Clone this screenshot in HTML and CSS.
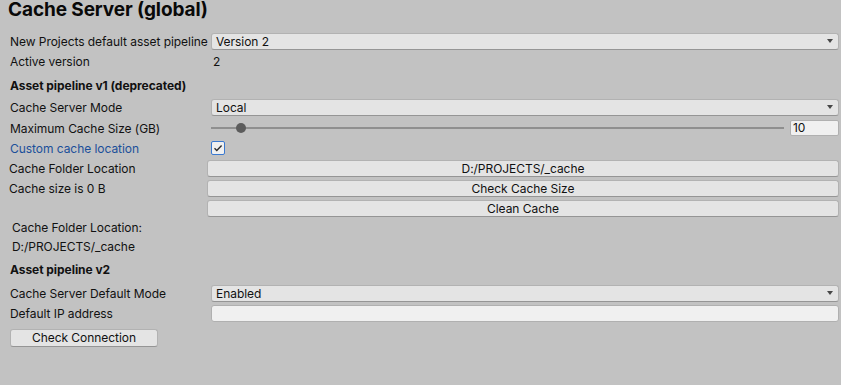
FILE: index.html
```html
<!DOCTYPE html>
<html>
<head>
<meta charset="utf-8">
<link rel="stylesheet" href="styles.css">
</head>
<body>
<div class="panel">
  <div class="title">Cache Server (global)</div>

  <div class="row r1">
    <div class="label">New Projects default asset pipeline</div>
    <div class="field"><div class="dropdown"><span>Version 2</span><span class="arrow"></span></div></div>
  </div>
  <div class="row">
    <div class="label">Active version</div>
    <div class="field"><span class="value">2</span></div>
  </div>

  <div class="row header h1">Asset pipeline v1 (deprecated)</div>

  <div class="row r-mode">
    <div class="label">Cache Server Mode</div>
    <div class="field"><div class="dropdown"><span>Local</span><span class="arrow"></span></div></div>
  </div>
  <div class="row r-size">
    <div class="label">Maximum Cache Size (GB)</div>
    <div class="field slider-field">
      <div class="slider"><div class="track"></div><div class="thumb"></div></div>
      <div class="numfield">10</div>
    </div>
  </div>
  <div class="row">
    <div class="label blue">Custom cache location</div>
    <div class="field">
      <div class="checkbox">
        <svg width="10" height="10" viewBox="0 0 10 10"><path d="M1.5 5.2 L3.8 7.4 L8.6 2.4" fill="none" stroke="#2b2b2b" stroke-width="1.4"/></svg>
      </div>
    </div>
  </div>
  <div class="row">
    <div class="label lb">Cache Folder Location</div>
    <div class="field bfield"><div class="button">D:/PROJECTS/_cache</div></div>
  </div>
  <div class="row">
    <div class="label lb">Cache size is 0 B</div>
    <div class="field bfield"><div class="button">Check Cache Size</div></div>
  </div>
  <div class="row">
    <div class="label lb"></div>
    <div class="field bfield"><div class="button">Clean Cache</div></div>
  </div>
  <div class="row info">Cache Folder Location:</div>
  <div class="row info">D:/PROJECTS/_cache</div>

  <div class="row header h2">Asset pipeline v2</div>

  <div class="row r-def">
    <div class="label">Cache Server Default Mode</div>
    <div class="field"><div class="dropdown"><span>Enabled</span><span class="arrow"></span></div></div>
  </div>
  <div class="row">
    <div class="label">Default IP address</div>
    <div class="field"><div class="textfield"></div></div>
  </div>
  <div class="row r-conn">
    <div class="button conn">Check Connection</div>
  </div>
</div>
</body>
</html>
```

FILE: styles.css
```css
html, body {
  margin: 0;
  padding: 0;
  background: #c2c2c2;
}
body {
  width: 841px;
  height: 385px;
  overflow: hidden;
  font-family: Inter, "Noto Sans", sans-serif;
  font-size: 12px;
  letter-spacing: -0.05px;
  color: #111111;
}
.panel {
  display: flex;
  flex-direction: column;
  padding: 0 2px 0 0;
}
.title {
  font-size: 19px;
  font-weight: 700;
  height: 21px;
  line-height: 19px;
  padding-left: 8px;
  letter-spacing: -0.1px;
  color: #090909;
}
.row {
  display: flex;
  align-items: center;
  height: 18px;
  margin-top: 2px;
}
.r1 { margin-top: 11px; }
.header {
  font-weight: 700;
  padding-left: 10px;
}
.h1 { margin-top: 6px; }
.r-mode { margin-top: 4px; }
.r-size { margin-top: 3px; }
.h2 { margin-top: 5px; }
.r-def { margin-top: 6px; }
.r-conn { margin-top: 7px; padding-left: 10px; }
.label {
  width: 201px;
  flex: none;
  padding-left: 10px;
  white-space: nowrap;
}
.label.lb { padding-left: 9px; width: 200px; }
.label.blue { color: #1b4f9a; }
.field {
  flex: 1;
  display: flex;
  align-items: center;
  height: 100%;
}
.value { padding-left: 2px; }
.dropdown {
  flex: 1;
  height: 17px;
  box-sizing: border-box;
  background: #e4e4e4;
  border: 1px solid #b2b2b2;
  border-bottom-color: #959595;
  border-radius: 3px;
  display: flex;
  align-items: center;
  justify-content: space-between;
  padding: 0 5px 0 4px;
}
.arrow {
  width: 0;
  height: 0;
  border-left: 3.5px solid transparent;
  border-right: 3.5px solid transparent;
  border-top: 4px solid #474747;
}
.slider-field { gap: 6px; }
.slider {
  flex: 1;
  position: relative;
  height: 18px;
}
.track {
  position: absolute;
  left: 0;
  right: 0;
  top: 8px;
  height: 2px;
  background: #8f8f8f;
}
.thumb {
  position: absolute;
  left: 25px;
  top: 4px;
  width: 10px;
  height: 10px;
  border-radius: 50%;
  background: #5c5c5c;
}
.numfield {
  width: 49px;
  height: 16px;
  box-sizing: border-box;
  background: #f0f0f0;
  border: 1px solid #b0b0b0;
  border-radius: 2px;
  padding-left: 2px;
  line-height: 14px;
}
.checkbox {
  width: 14px;
  height: 14px;
  box-sizing: border-box;
  border: 1px solid #3a79d0;
  border-radius: 2px;
  background: #f0f0f0;
  display: flex;
  align-items: center;
  justify-content: center;
}
.bfield { margin-left: -2px; }
.button {
  flex: 1;
  height: 17px;
  box-sizing: border-box;
  background: #e4e4e4;
  border: 1px solid #b2b2b2;
  border-bottom-color: #959595;
  border-radius: 3px;
  text-align: center;
  line-height: 15px;
}
.button.conn {
  flex: none;
  width: 148px;
  height: 18px;
  line-height: 16px;
}
.textfield {
  flex: 1;
  height: 17px;
  box-sizing: border-box;
  background: #f0f0f0;
  border: 1px solid #b0b0b0;
  border-radius: 3px;
}
.info { padding-left: 12px; margin-top: 1px; }
.panel { padding-right: 2px; }
```
